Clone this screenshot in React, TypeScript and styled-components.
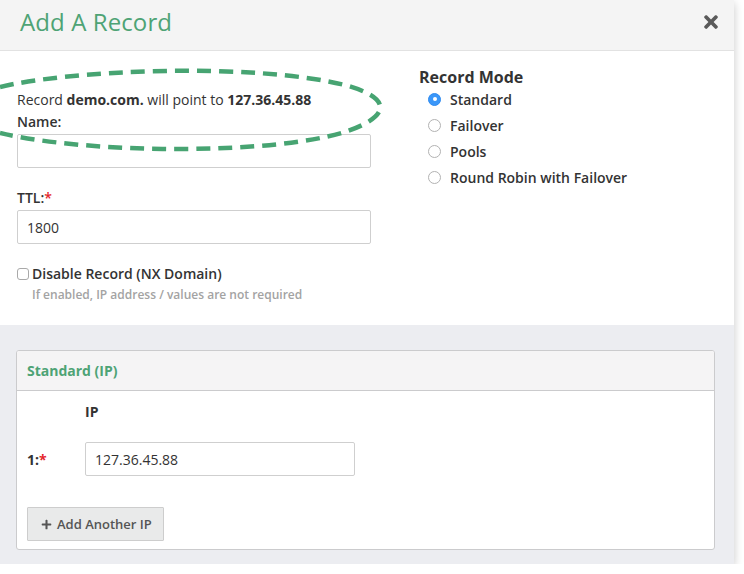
import React, { useState } from "react"
import styled, { createGlobalStyle } from "styled-components"
import { FaTimes, FaPlus } from "react-icons/fa"

const GlobalStyle = createGlobalStyle`
  html, body {
    margin: 0;
    padding: 0;
    background: #ffffff;
  }
  body {
    font-family: "Open Sans", "Liberation Sans", sans-serif;
    font-size: 14px;
    color: #333;
  }
  * {
    box-sizing: border-box;
  }
`

const green = "#4ea375"

const Modal = styled.div`
  position: relative;
  width: 734px;
  height: 564px;
  display: flex;
  flex-direction: column;
  background: #fff;
  box-shadow: 0 3px 9px rgba(0, 0, 0, 0.22);
  overflow: hidden;
`

const Header = styled.div`
  height: 51px;
  flex-shrink: 0;
  display: flex;
  align-items: center;
  justify-content: space-between;
  padding: 0 13px 7px 20px;
  background: #f4f4f4;
  border-bottom: 1px solid #e2e2e2;
`

const Title = styled.h1`
  margin: 0;
  font-size: 24px;
  font-weight: 400;
  color: ${green};
  letter-spacing: 0.1px;
`

const Close = styled.button`
  border: 0;
  background: none;
  padding: 0;
  display: flex;
  color: #5a5a5a;
  cursor: pointer;
`

const Top = styled.div`
  height: 274px;
  flex-shrink: 0;
  display: grid;
  grid-template-columns: 354px 1fr;
  column-gap: 48px;
  padding: 15px 17px 0 17px;
`

const Column = styled.div`
  display: flex;
  flex-direction: column;
`

const Notice = styled.div`
  margin-top: 23px;
  line-height: 22px;
`

const Label = styled.label`
  display: block;
  font-weight: 600;
  line-height: 22px;
  margin-bottom: 1px;
`

const Star = styled.span`
  color: #e4262b;
`

const TextInput = styled.input`
  display: block;
  width: 100%;
  height: 34px;
  padding: 6px 9px;
  border: 1px solid #cfcfcf;
  border-radius: 2px;
  font-family: inherit;
  font-size: 14px;
  color: #333;
  background: #fff;
  outline: none;
`

const FieldGap = styled.div`
  height: 19px;
`

const CheckRow = styled.label`
  display: flex;
  align-items: center;
  gap: 3px;
  margin-top: 19px;
  font-weight: 600;
  line-height: 22px;
  cursor: pointer;
`

const Box = styled.span`
  width: 12px;
  height: 12px;
  border: 1px solid #a9a9a9;
  border-radius: 3px;
  background: #fff;
`

const Help = styled.div`
  margin-left: 15px;
  font-size: 12px;
  font-weight: 600;
  color: #a3a3a3;
  line-height: 20px;
`

const ModeTitle = styled.div`
  font-size: 16px;
  font-weight: 700;
  line-height: 22px;
`

const RadioList = styled.div`
  margin-top: -2px;
  display: flex;
  flex-direction: column;
`

const RadioRow = styled.label`
  display: flex;
  align-items: center;
  gap: 9px;
  margin-left: 9px;
  height: 26px;
  font-weight: 600;
  cursor: pointer;
`

const Dot = styled.span<{ $on: boolean }>`
  width: 13px;
  height: 13px;
  border-radius: 50%;
  display: flex;
  align-items: center;
  justify-content: center;
  background: ${(p) => (p.$on ? "#3a97f9" : "#fff")};
  border: 1px solid ${(p) => (p.$on ? "#2f8bf0" : "#b2b2b2")};
  &::after {
    content: "";
    width: 4px;
    height: 4px;
    border-radius: 50%;
    background: #fff;
    display: ${(p) => (p.$on ? "block" : "none")};
  }
`

const Lower = styled.div`
  flex: 1;
  background: #ecedf1;
  padding: 25px 19px 14px 16px;
`

const Panel = styled.div`
  height: 200px;
  border: 1px solid #cbcbcd;
  border-radius: 3px;
  background: #fff;
  overflow: hidden;
`

const PanelHead = styled.div`
  height: 40px;
  display: flex;
  align-items: center;
  padding: 0 10px;
  background: #f5f4f5;
  border-bottom: 1px solid #cbcbcd;
  color: ${green};
  font-weight: 700;
`

const PanelBody = styled.div`
  padding: 9px 10px 0 10px;
`

const IpGrid = styled.div`
  display: grid;
  grid-template-columns: 58px 270px;
  grid-template-rows: 22px 34px;
  row-gap: 20px;
  align-items: center;
  font-weight: 700;
`

const AddButton = styled.button`
  margin-top: 31px;
  height: 34px;
  display: flex;
  align-items: center;
  gap: 5px;
  padding: 0 11px 0 13px;
  background: #e9eaea;
  border: 1px solid #cdcdcd;
  border-radius: 1px;
  font-family: inherit;
  font-size: 13px;
  font-weight: 600;
  color: #555;
  cursor: pointer;
`

const Annotation = styled.svg`
  position: absolute;
  left: 0;
  top: 60px;
  pointer-events: none;
`

const modes = ["Standard", "Failover", "Pools", "Round Robin with Failover"]

export default function App(): JSX.Element {
  const [mode, setMode] = useState("Standard")
  return (
    <>
      <GlobalStyle />
      <Modal>
        <Header>
          <Title>Add A Record</Title>
          <Close aria-label="close">
            <FaTimes size={20} />
          </Close>
        </Header>
        <Top>
          <Column>
            <Notice>
              Record <b>demo.com.</b> will point to <b>127.36.45.88</b>
            </Notice>
            <Label>Name:</Label>
            <TextInput />
            <FieldGap />
            <Label>
              TTL:<Star>*</Star>
            </Label>
            <TextInput defaultValue="1800" />
            <CheckRow>
              <Box />
              Disable Record (NX Domain)
            </CheckRow>
            <Help>If enabled, IP address / values are not required</Help>
          </Column>
          <Column>
            <ModeTitle>Record Mode</ModeTitle>
            <RadioList>
              {modes.map((m) => (
                <RadioRow key={m} onClick={() => setMode(m)}>
                  <Dot $on={mode === m} />
                  {m}
                </RadioRow>
              ))}
            </RadioList>
          </Column>
        </Top>
        <Lower>
          <Panel>
            <PanelHead>Standard (IP)</PanelHead>
            <PanelBody>
              <IpGrid>
                <span />
                <span>IP</span>
                <span>
                  1:<Star>*</Star>
                </span>
                <TextInput defaultValue="127.36.45.88" />
              </IpGrid>
              <AddButton>
                <FaPlus size={11} />
                Add Another IP
              </AddButton>
            </PanelBody>
          </Panel>
        </Lower>
        <Annotation width="400" height="100" viewBox="0 0 400 100">
          <path
            d="M 0 27 C 70 10, 250 2, 345 25 C 392 38, 392 56, 345 72 C 270 95, 90 94, 0 73"
            fill="none"
            stroke="#47a472"
            strokeWidth="4.5"
            strokeDasharray="14 8"
          />
        </Annotation>
      </Modal>
    </>
  )
}
